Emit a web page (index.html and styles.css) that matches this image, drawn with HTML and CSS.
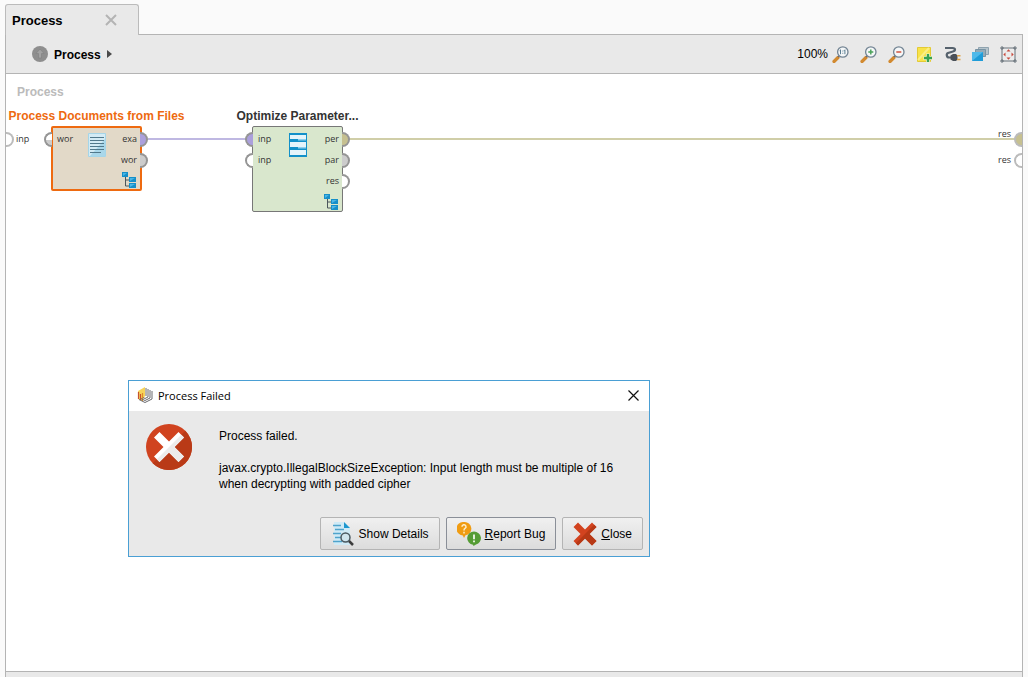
FILE: index.html
```html
<!DOCTYPE html>
<html lang="en">
<head>
    <meta charset="utf-8">
    <title>Process</title>
    <link rel="stylesheet" href="styles.css">
</head>
<body>
    <nav class="tabs">
        <div class="tab">
            <span>Process</span>
            <button class="tab-close" aria-label="Close tab">
                <svg width="12" height="12" viewBox="0 0 12 12"><path d="M1 1l10 10M11 1L1 11" stroke="#b4b4b4" stroke-width="2"/></svg>
            </button>
        </div>
    </nav>

    <main class="panel">
        <header class="toolbar">
            <button class="icon-btn" aria-label="Up">
                <svg width="16" height="16" viewBox="0 0 16 16"><circle cx="8" cy="8" r="8" fill="#8e8e8e"/><path d="M8 3l4 4.500H9.500V12h-3V7.500H4z" fill="#a2a2a2" stroke="#808080" stroke-width=".6"/></svg>
            </button>
            <a class="crumb" href="#">Process</a>
            <svg width="5" height="8" viewBox="0 0 5 8"><path d="M0 0l5 4-5 4z" fill="#4a4a4a"/></svg>

            <div class="tools">
                <span class="zoom">100%</span>
                <button class="icon-btn" aria-label="Actual size">
                    <svg width="17" height="17" viewBox="0 0 17 17"><path d="M2 15.500L6 11.500" stroke="#d28a30" stroke-width="3.200" stroke-linecap="round"/><path d="M6 11l1.500-1.500" stroke="#667" stroke-width="1.500"/><circle cx="10.800" cy="6" r="5.200" fill="#f5f7f8" stroke="#728493" stroke-width="1.300"/><path d="M8.500 3.800v4.400M12.900 3.800v4.400M7.600 4.700l.9-.9M12 4.700l.9-.9M10.800 4.600v.9M10.800 6.800v.9" stroke="#5a7d92" fill="none"/></svg>
                </button>
                <button class="icon-btn" aria-label="Zoom in">
                    <svg width="17" height="17" viewBox="0 0 17 17"><path d="M2 15.500L6 11.500" stroke="#d28a30" stroke-width="3.200" stroke-linecap="round"/><path d="M6 11l1.500-1.500" stroke="#667" stroke-width="1.500"/><circle cx="10.800" cy="6" r="5.200" fill="#f5f7f8" stroke="#728493" stroke-width="1.300"/><path d="M8.300 6h5M10.800 3.500v5" stroke="#4ba35a" stroke-width="1.500"/></svg>
                </button>
                <button class="icon-btn" aria-label="Zoom out">
                    <svg width="17" height="17" viewBox="0 0 17 17"><path d="M2 15.500L6 11.500" stroke="#d28a30" stroke-width="3.200" stroke-linecap="round"/><path d="M6 11l1.500-1.500" stroke="#667" stroke-width="1.500"/><circle cx="10.800" cy="6" r="5.200" fill="#f5f7f8" stroke="#728493" stroke-width="1.300"/><path d="M8.300 6h5" stroke="#d0533f" stroke-width="1.500"/></svg>
                </button>
                <button class="icon-btn" aria-label="Add note">
                    <svg width="17" height="17" viewBox="0 0 17 17"><path d="M1.500 1.500h13v14h-13z" fill="#f8e34a" stroke="#e3ca35"/><path d="M2 14L13 2" stroke="#fbee86" stroke-width="2"/><path d="M7.500 12h9M12 7.500v9" stroke="#f6f3c8" stroke-width="4"/><path d="M8 12h8M12 8v8" stroke="#38a353" stroke-width="2.400"/></svg>
                </button>
                <button class="icon-btn" aria-label="Connect">
                    <svg width="17" height="17" viewBox="0 0 17 17"><path d="M1 2h7.500c3.500 0 3 3 .5 3.500L4 7c-2 .8-1.500 4.500 1 4.500h3" fill="none" stroke="#56626d" stroke-width="2.200"/><path d="M6.500 9.500L9 8h3l1.500 1.500v4L12 15H9l-2.500-1.500z" fill="#4a5058"/><path d="M13 9.700h3.500M13 13.500h3.500" stroke="#dda24a" stroke-width="1.600"/></svg>
                </button>
                <button class="icon-btn" aria-label="Operator order">
                    <svg width="17" height="17" viewBox="0 0 17 17"><path d="M6.500 1.500h10v7h-10z" fill="#b6c4cc" stroke="#8fa3af"/><path d="M3.500 3.500h10v7h-10z" fill="#93aab7" stroke="#7893a3"/><path d="M0 6h11v9H0z" fill="#1f9cd8"/><path d="M0 6h11L0 15z" fill="#4fb9ea"/></svg>
                </button>
                <button class="icon-btn" aria-label="Auto fit">
                    <svg width="17" height="17" viewBox="0 0 17 17"><path d="M2 2h13v13H2z" fill="#ececec" stroke="#68727a"/><path d="M0 2h4M2 0v4M13 2h4M15 0v4M0 15h4M2 13v4M13 15h4M15 13v4" stroke="#68727a"/><path d="M8.500 3.300l2 2.200h-4zM8.500 13.700l2-2.200h-4zM3.300 8.500l2.200-2v4zM13.700 8.500l-2.200-2v4z" fill="#c8493d"/></svg>
                </button>
            </div>
        </header>

        <section class="canvas">
            <h1>Process</h1>

            <div class="wire wire-exa"></div>
            <div class="wire wire-per"></div>

            <div class="ports edge-in">
                <div class="port out"><i class="knob faint"></i>inp</div>
            </div>
            <div class="ports edge-out">
                <div class="port in"><i class="knob olive faint"></i>res</div>
                <div class="port in low"><i class="knob faint"></i>res</div>
            </div>

            <div class="operator documents">
                <h2>Process Documents from Files</h2>
                <div class="box selected">
                    <div class="ports">
                        <div class="port in"><i class="knob half"></i>wor</div>
                    </div>
                    <svg class="glyph" width="18" height="24" viewBox="0 0 18 24"><path d="M.5.500h17v23H.5z" fill="#d3ebf5" stroke="#a5d5e8"/><path d="M17 6v17H2z" fill="#a9d7ea"/><path d="M2 4.500h14M2 7.500h14M2 10.500h14M2 13.500h14M2 16.500h14M2 19.500h11" stroke="#52798c"/></svg>
                    <div class="ports right">
                        <div class="port out">exa<i class="knob violet"></i></div>
                        <div class="port out">wor<i class="knob gray"></i></div>
                    </div>
                    <svg class="sub" width="14" height="16" viewBox="0 0 14 16"><path d="M3.500 5v9H8M3.500 8H8" fill="none" stroke="#4c565c"/><path d="M0 0h6v5H0zM7 5h7v5H7zM7 11h7v5H7z" fill="#168fc9"/><path d="M1 1h4L1 4zM8 6h5l-5 3zM8 12h5l-5 3z" fill="#4ab6e6"/></svg>
                </div>
            </div>

            <div class="operator optimize">
                <h2>Optimize Parameter...</h2>
                <div class="box">
                    <div class="ports">
                        <div class="port in"><i class="knob violet"></i>inp</div>
                        <div class="port in"><i class="knob"></i>inp</div>
                    </div>
                    <svg class="glyph" width="18" height="24" viewBox="0 0 18 24"><path d="M0 0h18v24H0z" fill="#1290c9"/><path d="M1 2h16v4H1zM1 9h16v5H1zM1 17h16v5H1z" fill="#e4f4fb"/><path d="M9 6h8v1.500H9zM9 14h8v1.500H9z" fill="#8fd0ee"/></svg>
                    <div class="ports right">
                        <div class="port out">per<i class="knob olive"></i></div>
                        <div class="port out">par<i class="knob gray"></i></div>
                        <div class="port out">res<i class="knob"></i></div>
                    </div>
                    <svg class="sub" width="14" height="16" viewBox="0 0 14 16"><path d="M3.500 5v9H8M3.500 8H8" fill="none" stroke="#4c565c"/><path d="M0 0h6v5H0zM7 5h7v5H7zM7 11h7v5H7z" fill="#168fc9"/><path d="M1 1h4L1 4zM8 6h5l-5 3zM8 12h5l-5 3z" fill="#4ab6e6"/></svg>
                </div>
            </div>

            <div class="dialog" role="dialog" aria-labelledby="dialog-title">
                <div class="titlebar">
                    <svg width="16" height="16" viewBox="0 0 16 16"><path d="M1 4l7-4v9l-3 5-4-2z" fill="#f6d35a"/><path d="M1.500 5v7M3.500 7v6" stroke="#c5522f" stroke-width="1.200"/><path d="M5.500 6v8" stroke="#e08a2c" stroke-width="1.200"/><path d="M2 12.500l6 3 7-3.500V4M4 11.500l4 2 5-2.500V3M6 10.500l2 1 3-1.500V2M9 1v8" fill="none" stroke="#6a6a6e"/></svg>
                    <span id="dialog-title">Process Failed</span>
                    <button class="dialog-close" aria-label="Close window">
                        <svg width="11" height="11" viewBox="0 0 11 11"><path d="M.5.500l10 10M10.500.500l-10 10" stroke="#111" stroke-width="1.200"/></svg>
                    </button>
                </div>
                <div class="message">
                    <svg width="46" height="46" viewBox="0 0 46 46"><circle cx="23" cy="23" r="23" fill="#d0431f"/><path d="M39.300 6.700A23 23 0 0 1 6.700 39.300z" fill="#b93a17"/><path d="M13.500 8L23 17.500 32.500 8 38 13.500 28.500 23 38 32.500 32.500 38 23 28.500 13.500 38 8 32.500 17.500 23 8 13.500z" fill="#fff"/><path d="M38 13.500L28.500 23 38 32.500 32.500 38 23 28.500 13.500 38l-2.700-2.700L35.300 10.800z" fill="#ececec"/></svg>
                    <div class="text">
                        <p>Process failed.</p>
                        <p>javax.crypto.IllegalBlockSizeException: Input length must be multiple of 16 when decrypting with padded cipher</p>
                    </div>
                </div>
                <div class="actions">
                    <button class="btn">
                        <svg width="24" height="24" viewBox="0 0 24 24"><path d="M3 0h10l6 6v17H3z" fill="#cfeaf6"/><path d="M13 0l6 6h-6z" fill="#1c97cf"/><path d="M2 3.500h8M4 7.500h9M2 11.500h8M4 15.500h6M2 19.500h9" stroke="#4fa3cb" stroke-width="1.300"/><circle cx="14.500" cy="15.500" r="4.500" fill="#cfe5ee" stroke="#4a5960" stroke-width="1.500"/><path d="M18 19l4 4" stroke="#3d3d3d" stroke-width="2.500"/></svg>
                        Show Details
                    </button>
                    <button class="btn focused">
                        <svg width="24" height="24" viewBox="0 0 24 24"><path d="M7 0a7 6.700 0 0 1 1.500 13.300L7 16l-1.200-2.600A7 6.700 0 0 1 7 0z" fill="#f09c12"/><path d="M5 4.800a2 2 0 1 1 3 1.600q-1 .6-1 2M7 9.800v1.700" fill="none" stroke="#fdeecb" stroke-width="1.500"/><path d="M17 9.500a7 6.700 0 0 1 2 13.100L16.500 24l-.5-1.200A7 6.700 0 0 1 17 9.500z" fill="#559c35"/><path d="M17 12.500v4.700M17 18.500v1.800" stroke="#f2f8ec" stroke-width="1.800"/></svg>
                        <span><u>R</u>eport Bug</span>
                    </button>
                    <button class="btn">
                        <svg width="24" height="24" viewBox="0 0 24 24"><path d="M5 .5l7 7 7-7L23.500 5 16.500 12l7 7L19 23.500l-7-7-7 7L.5 19l7-7-7-7z" fill="#d2431f"/><path d="M23.500 5L16.500 12l7 7L19 23.500l-7-7-7 7-2.200-2.200L21.200 2.700z" fill="#b73916"/></svg>
                        <span><u>C</u>lose</span>
                    </button>
                </div>
            </div>
        </section>

        <footer class="status"></footer>
    </main>
</body>
</html>
```

FILE: styles.css
```css
* {
    margin: 0;
    padding: 0;
    box-sizing: border-box;
}

body {
    height: 100vh;
    display: flex;
    flex-direction: column;
    padding: 4px 5px 0;
    background: #fafafa;
    color: #000;
    font-family: "Liberation Sans", Arial, sans-serif;
    font-size: 12px;
    overflow: hidden;
}

button {
    border: none;
    background: none;
    font: inherit;
    color: inherit;
}

svg {
    display: block;
    flex: none;
}

/* tab strip */
.tabs {
    display: flex;
    position: relative;
    z-index: 1;
    margin-bottom: -1px;
}

.tab {
    display: flex;
    align-items: center;
    justify-content: space-between;
    width: 134px;
    height: 31px;
    padding: 0 21px 0 6px;
    background: #e9e9e9;
    border: 1px solid #bbb;
    border-bottom: none;
    border-radius: 3px 3px 0 0;
    font-size: 13px;
    font-weight: bold;
}

/* main panel */
.panel {
    flex: 1;
    display: flex;
    flex-direction: column;
    border: 1px solid #b4b4b4;
    border-bottom: none;
}

.toolbar {
    display: flex;
    align-items: center;
    gap: 6px;
    height: 39px;
    padding: 0 5px 0 26px;
    background: #e9e9e9;
    border-bottom: 1px solid #b4b4b4;
}

.crumb {
    padding-top: 2px;
    color: #000;
    font-weight: bold;
    text-decoration: none;
}

.tools {
    display: flex;
    align-items: center;
    gap: 11px;
    margin-left: auto;
}

.zoom {
    margin-right: -7px;
}

.canvas {
    flex: 1;
    position: relative;
    overflow: hidden;
    background: #fff;
    padding: 10px 11px;
    font-family: "Open Sans", sans-serif;
    font-size: 9px;
    color: #333;
}

.canvas h1 {
    font-family: "Liberation Sans", Arial, sans-serif;
    font-size: 12px;
    line-height: 16px;
    color: #bbb;
}

.status {
    height: 6px;
    background: #e9e9e9;
    border-top: 1px solid #b4b4b4;
}

/* operators on the canvas */
.operator {
    position: absolute;
    top: 34px;
    width: 91px;
    display: flex;
    flex-direction: column;
    align-items: center;
}

.documents { left: 45px; }
.optimize { left: 246px; }

.operator h2 {
    font-family: "Liberation Sans", Arial, sans-serif;
    font-size: 12px;
    line-height: 16px;
    margin-bottom: 2px;
    white-space: nowrap;
}

.documents h2 {
    color: #ee6a10;
}

.box {
    position: relative;
    display: flex;
    justify-content: space-between;
    width: 100%;
    padding: 2px 3px 19px 5px;
    background: #d9e7cd;
    border: 1px solid #777;
    border-radius: 2px;
}

.box.selected {
    padding: 1px 3px 18px 4px;
    background: #e2d9c8;
    border: 2px solid #ee6a10;
}

.glyph {
    margin-top: 4px;
}

.sub {
    position: absolute;
    right: 4px;
    bottom: 1px;
}

.ports.right {
    text-align: right;
}

.port {
    position: relative;
    height: 21px;
    line-height: 20px;
}

/* half-round connectors sit on the outer edge of the box */
.knob {
    position: absolute;
    top: 3px;
    width: 8px;
    height: 15px;
    border: 2px solid #959595;
    background: #fff;
}

.port.in .knob {
    left: -13px;
    border-right: none;
    border-radius: 8px 0 0 8px;
}

.port.out .knob {
    right: -11px;
    border-left: none;
    border-radius: 0 8px 8px 0;
}

.knob.violet { background: #aba0dc; }
.knob.gray { background: #ccc; }
.knob.olive { background: #c6c090; }
.knob.half { background: linear-gradient(#fff 50%, #ccc 50%); }
.knob.faint { border-color: #bbb; }

.edge-in {
    position: absolute;
    left: 0;
    top: 55px;
    padding-left: 10px;
}

.edge-in .port.out .knob {
    left: -10px;
    right: auto;
}

.edge-out {
    position: absolute;
    right: 0;
    top: 55px;
    padding-right: 11px;
}

.edge-out .port {
    line-height: 10px;
}

.edge-out .port.low {
    line-height: 20px;
}

.edge-out .port.in .knob {
    left: auto;
    right: -11px;
}

.wire {
    position: absolute;
    top: 64px;
    height: 2px;
}

.wire-exa {
    left: 142px;
    width: 98px;
    background: #bfb8e2;
}

.wire-per {
    left: 343px;
    right: 6px;
    background: #d0cea8;
}

/* error dialog */
.dialog {
    position: absolute;
    left: 122px;
    top: 306px;
    width: 522px;
    background: #e9e9e9;
    border: 1px solid #4a9fd4;
    color: #000;
    font-family: "Liberation Sans", Arial, sans-serif;
    font-size: 12px;
}

.titlebar {
    display: flex;
    align-items: center;
    gap: 5px;
    height: 30px;
    padding: 0 10px 2px 8px;
    background: #fff;
    font-family: "Open Sans", "Segoe UI", sans-serif;
    font-size: 11px;
}

.dialog-close {
    margin-left: auto;
}

.message {
    display: flex;
    gap: 27px;
    padding: 13px 17px 0;
}

.text {
    width: 410px;
    padding-top: 4px;
    line-height: 16px;
}

.text p + p {
    margin-top: 16px;
}

.actions {
    display: flex;
    justify-content: flex-end;
    gap: 6px;
    padding: 25px 6px 6px;
}

.btn {
    display: flex;
    align-items: center;
    gap: 4px;
    height: 33px;
    padding: 0 10px;
    background: linear-gradient(#f0f0f0, #dcdcdc);
    border: 1px solid #b4b4b4;
    border-radius: 2px;
}

.btn.focused {
    border-color: #8a8f98;
}
```
